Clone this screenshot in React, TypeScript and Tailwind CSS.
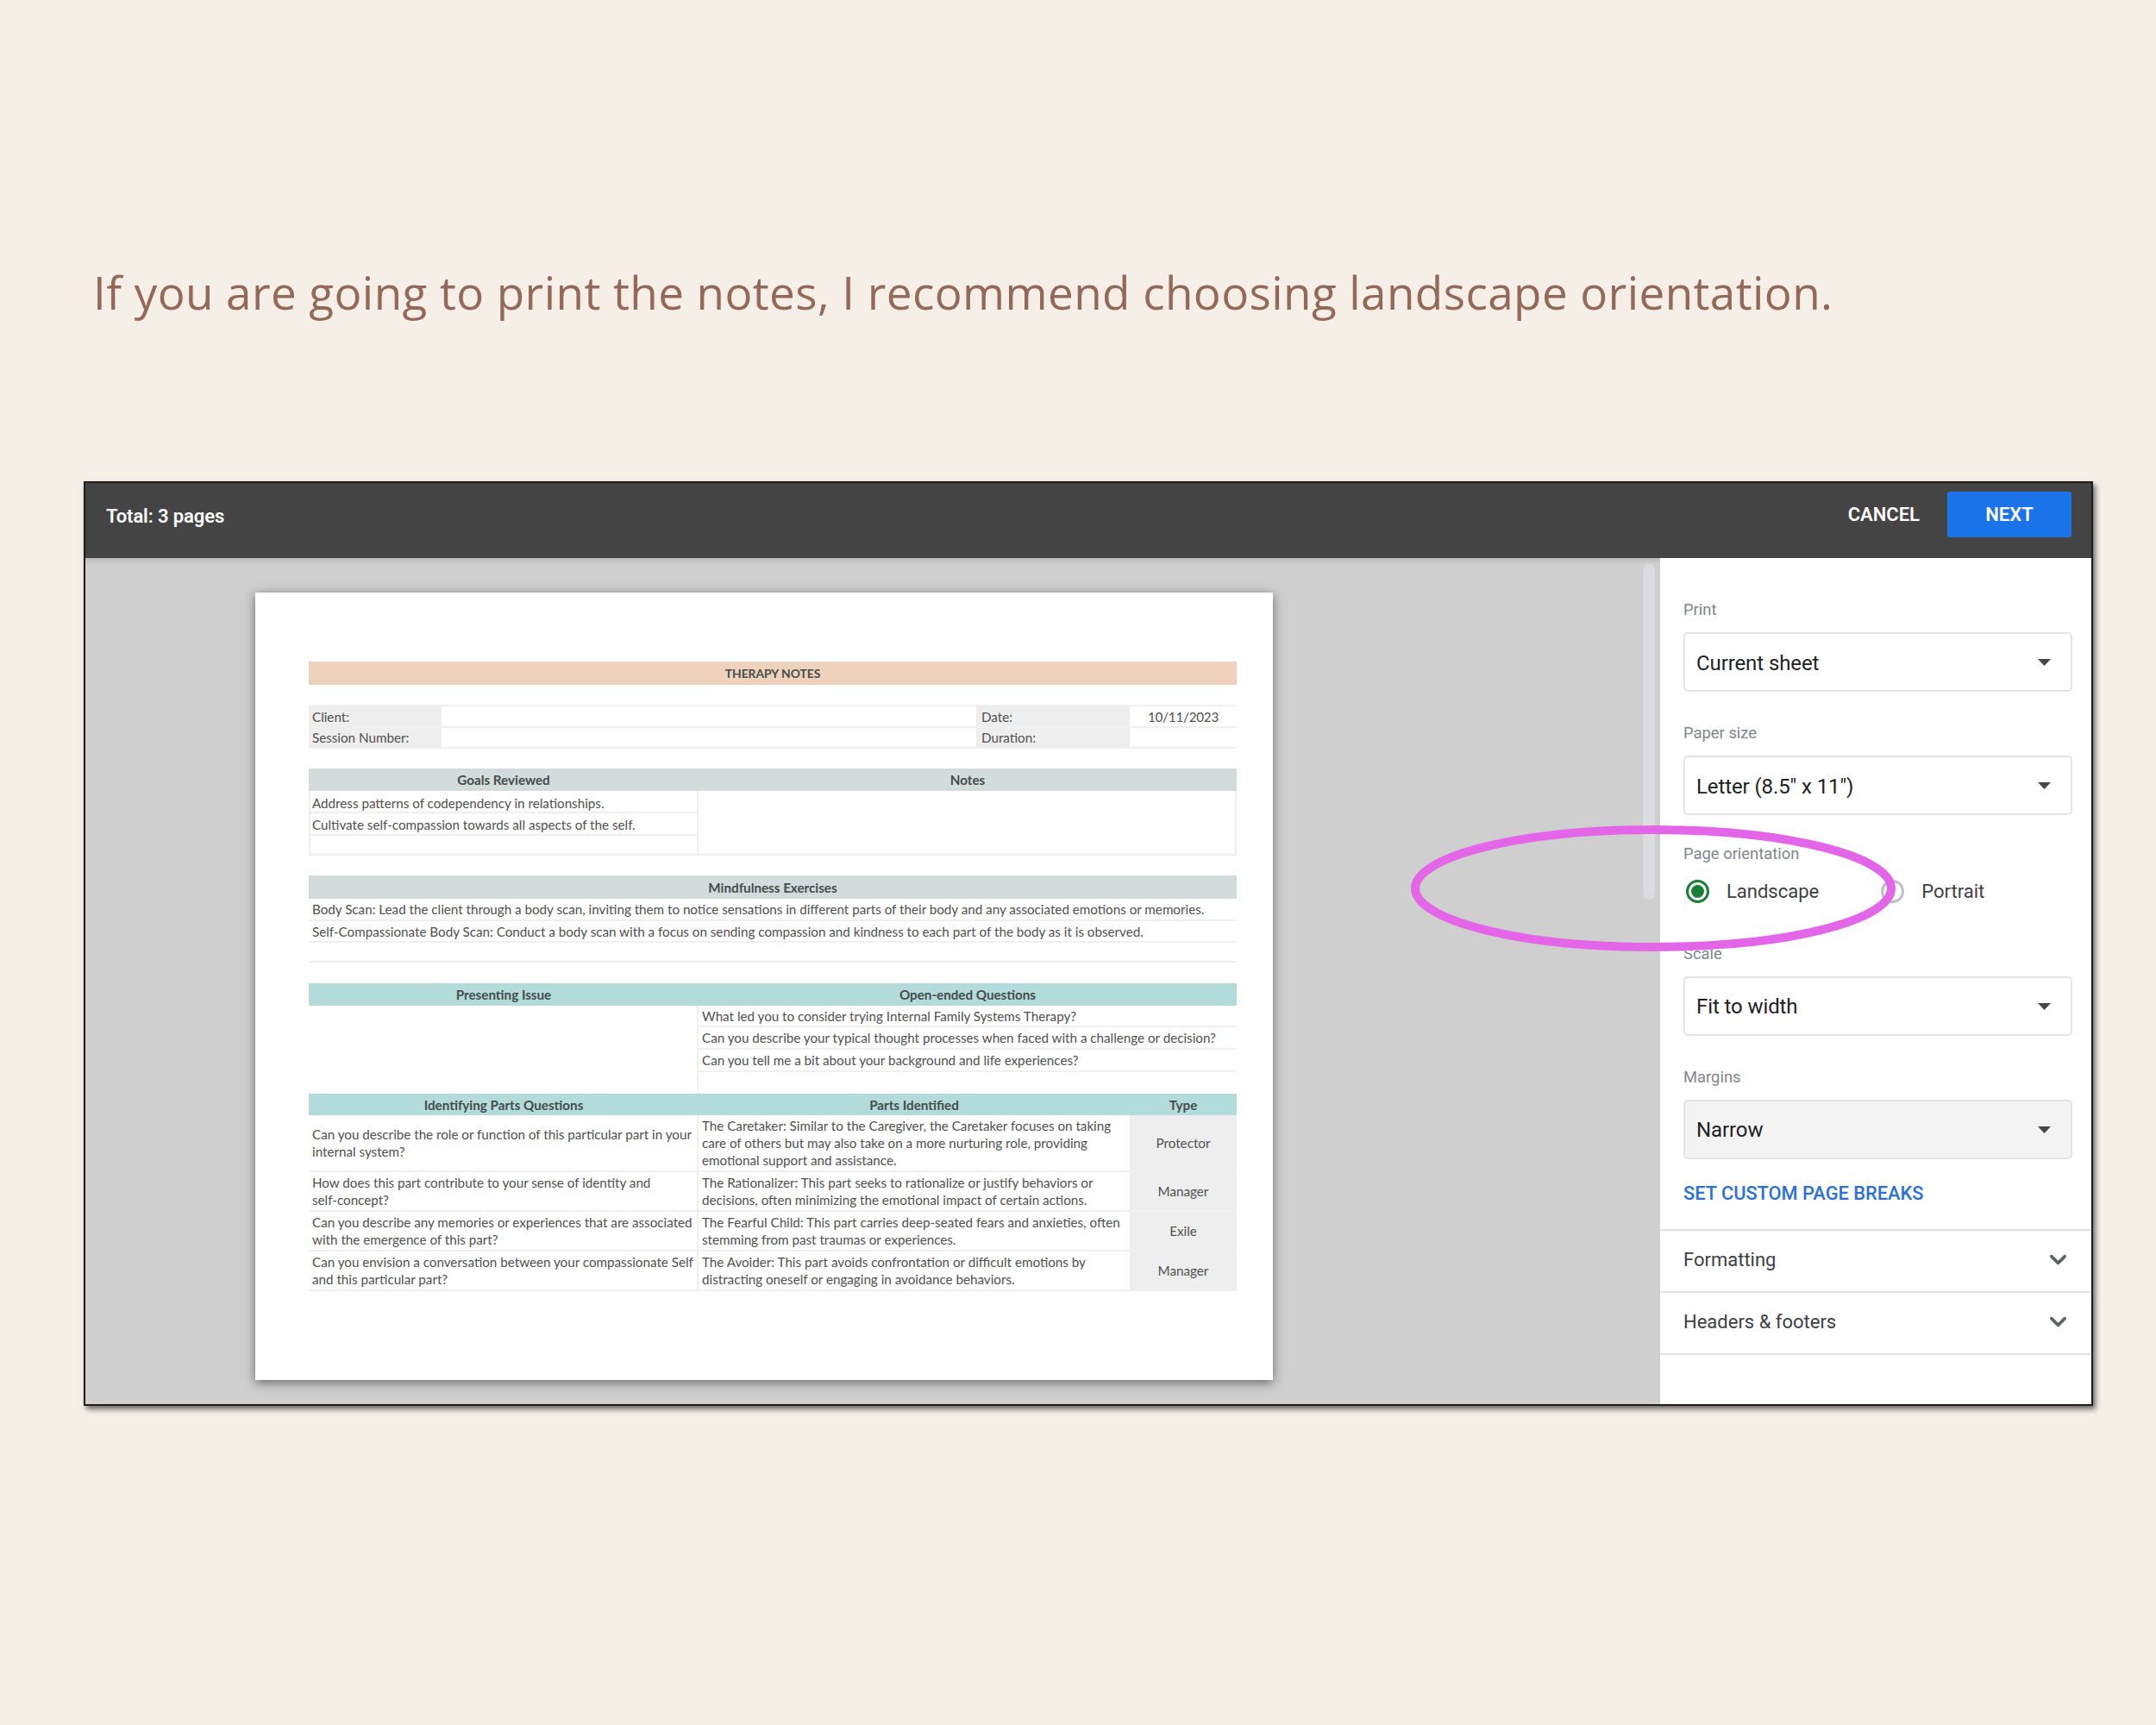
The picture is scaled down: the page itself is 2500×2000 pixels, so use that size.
import { ChevronDown } from 'lucide-react';

const sans = 'font-["Lato",sans-serif]';

function Caret() {
  return (
    <svg width="15" height="8" viewBox="0 0 15 8" className="shrink-0">
      <path d="M0 0h15L7.5 8z" fill="#444746" />
    </svg>
  );
}

function Field({ label, value, mt, muted, flush }: { label: string; value: string; mt: string; muted?: boolean; flush?: boolean }) {
  return (
    <div className={mt}>
      <div className="text-[18.4px] leading-[22px] text-[#80868b]">{label}</div>
      <div
        className={`mt-[15px] h-[69px] flex items-center justify-between pl-[13px] pr-[23px] border-2 border-[#e3e4e6] rounded-[5px] ${
          muted ? 'bg-[#f3f3f3]' : 'bg-white'
        }`}
      >
        <span className={`text-[24px] text-[#202124] tracking-[-0.1px] ${flush ? '' : 'pt-[2px]'}`}>{value}</span>
        <Caret />
      </div>
    </div>
  );
}

function Radio({ checked, label }: { checked?: boolean; label: string }) {
  return (
    <div className="flex items-center gap-[20px]">
      <div
        className={`w-[27px] h-[27px] rounded-full border-[3px] flex items-center justify-center ${
          checked ? 'border-[#188038]' : 'border-[#bdc1c6]'
        }`}
      >
        {checked && <div className="w-[15px] h-[15px] rounded-full bg-[#188038]" />}
      </div>
      <span className="text-[22px] text-[#3c4043]">{label}</span>
    </div>
  );
}

function Expander({ label }: { label: string }) {
  return (
    <div className="h-[72px] pb-[3px] border-t-2 border-[#e0e1e3] flex items-center justify-between pl-[27px] pr-[23px]">
      <span className="text-[22px] text-[#3c4043]">{label}</span>
      <ChevronDown className="w-[31px] h-[31px] text-[#5f6368]" strokeWidth={2.8} />
    </div>
  );
}

const Cell = ({ className = '', children }: { className?: string; children?: React.ReactNode }) => (
  <div className={`flex items-center px-[4px] border-b-2 border-[#f0f0f0] ${className}`}>{children}</div>
);

function Band({ color, children, className = '' }: { color: string; children: React.ReactNode; className?: string }) {
  return <div className={`flex font-bold text-[#454c4c] ${color} ${className}`}>{children}</div>;
}

const parts = [
  {
    h: 'h-[66px]',
    q: 'Can you describe the role or function of this particular part in your\ninternal system?',
    p: 'The Caretaker: Similar to the Caregiver, the Caretaker focuses on taking\ncare of others but may also take on a more nurturing role, providing\nemotional support and assistance.',
    t: 'Protector',
  },
  {
    h: 'h-[46px]',
    q: 'How does this part contribute to your sense of identity and\nself-concept?',
    p: 'The Rationalizer: This part seeks to rationalize or justify behaviors or\ndecisions, often minimizing the emotional impact of certain actions.',
    t: 'Manager',
  },
  {
    h: 'h-[46px]',
    q: 'Can you describe any memories or experiences that are associated\nwith the emergence of this part?',
    p: 'The Fearful Child: This part carries deep-seated fears and anxieties, often\nstemming from past traumas or experiences.',
    t: 'Exile',
  },
  {
    h: 'h-[46px]',
    q: 'Can you envision a conversation between your compassionate Self\nand this particular part?',
    p: 'The Avoider: This part avoids confrontation or difficult emotions by\ndistracting oneself or engaging in avoidance behaviors.',
    t: 'Manager',
  },
];

function Sheet() {
  return (
    <div className={`w-[1076px] ${sans} text-[15.2px] leading-[20px] text-[#505050] whitespace-pre`}>
      <Band color="bg-[#eed2bc]" className="h-[27px] items-center justify-center text-[13.8px]">
        THERAPY NOTES
      </Band>

      <div className="mt-[23px] grid grid-cols-[154px_620px_178px_124px] grid-rows-[25px_24px] border-t-2 border-[#f0f0f0]">
        <Cell className="bg-[#eeeeee]">Client:</Cell>
        <Cell />
        <Cell className="bg-[#eeeeee] pl-[6px]">Date:</Cell>
        <Cell className="justify-center tracking-[-0.2px]">10/11/2023</Cell>
        <Cell className="bg-[#eeeeee]">Session Number:</Cell>
        <Cell />
        <Cell className="bg-[#eeeeee] pl-[6px]">Duration:</Cell>
        <Cell />
      </div>

      <Band color="bg-[#d3dcdb]" className="mt-[23px] h-[26px] items-center">
        <div className="w-[452px] text-center">Goals Reviewed</div>
        <div className="flex-1 text-center">Notes</div>
      </Band>
      <div className="flex border-x-2 border-[#f0f0f0]">
        <div className="w-[450px] border-r-2 border-[#f0f0f0]">
          <Cell className="h-[26px] pl-[2px] pt-[3px]">Address patterns of codependency in relationships.</Cell>
          <Cell className="h-[26px] pl-[2px] pt-[1px]">Cultivate self-compassion towards all aspects of the self.</Cell>
          <Cell className="h-[23px]" />
        </div>
        <div className="flex-1 border-b-2 border-[#f0f0f0]" />
      </div>

      <Band color="bg-[#d3dcdb]" className="mt-[23px] h-[27px] items-center justify-center">
        Mindfulness Exercises
      </Band>
      <Cell className="h-[26px]">
        Body Scan: Lead the client through a body scan, inviting them to notice sensations in different parts of their body and any associated emotions or memories.
      </Cell>
      <Cell className="h-[25px]">
        Self-Compassionate Body Scan: Conduct a body scan with a focus on sending compassion and kindness to each part of the body as it is observed.
      </Cell>
      <Cell className="h-[23px]" />

      <Band color="bg-[#b2dbda]" className="mt-[24px] h-[26px] items-center">
        <div className="w-[452px] text-center">Presenting Issue</div>
        <div className="flex-1 text-center">Open-ended Questions</div>
      </Band>
      <div className="flex">
        <div className="w-[452px] border-r-2 border-[#f0f0f0]" />
        <div className="flex-1">
          <Cell className="h-[25px]">What led you to consider trying Internal Family Systems Therapy?</Cell>
          <Cell className="h-[26px]">Can you describe your typical thought processes when faced with a challenge or decision?</Cell>
          <Cell className="h-[26px]">Can you tell me a bit about your background and life experiences?</Cell>
          <div className="h-[22px]" />
        </div>
      </div>

      <Band color="bg-[#b2dbda]" className="mt-[3px] h-[25px] items-center">
        <div className="w-[452px] text-center">Identifying Parts Questions</div>
        <div className="w-[500px] text-center">Parts Identified</div>
        <div className="flex-1 text-center">Type</div>
      </Band>
      {parts.map((r) => (
        <div key={r.p} className={`flex ${r.h}`}>
          <Cell className="w-[452px] border-r-2">
            <span className="block">{r.q}</span>
          </Cell>
          <Cell className="w-[500px]">
            <span className="block">{r.p}</span>
          </Cell>
          <Cell className="flex-1 justify-center bg-[#eeeeee] border-[#e4e4e4]">{r.t}</Cell>
        </div>
      ))}
    </div>
  );
}

export default function App() {
  return (
    <div className="relative w-[2500px] h-[2000px] bg-[#f5efe8] font-['Roboto',sans-serif] pt-[303px]">
      <h1 className="ml-[108px] text-[53px] leading-[72px] tracking-[0.42px] whitespace-nowrap text-[#94695a] font-['Open_Sans',sans-serif]">
        If you are going to print the notes, I recommend choosing landscape orientation.
      </h1>

      <div className="relative ml-[97px] mt-[183px] w-[2330px] h-[1072px] border-2 border-[#1c1c1c] shadow-[3px_4px_6px_rgba(0,0,0,0.55)] flex flex-col bg-white">
        <div className="h-[87px] shrink-0 bg-[#444444] flex items-start justify-between pl-[24px] pr-[23px] pt-[10px]">
          <span className="mt-[16px] text-[22px] leading-[26px] font-semibold text-white tracking-[-0.1px]">Total: 3 pages</span>
          <div className="flex items-center gap-[32px]">
            <span className="text-[22px] font-semibold text-white">CANCEL</span>
            <button className="w-[144px] h-[53px] rounded-[3px] bg-[#1a73e8] text-[22px] font-semibold text-white">NEXT</button>
          </div>
        </div>

        <div className="flex-1 flex min-h-0">
          <div className="relative flex-1 bg-[#cfcfcf] shadow-[inset_0_8px_8px_-8px_rgba(0,0,0,0.2)]">
            <div className="absolute right-[6px] top-[7px] w-[14px] h-[389px] rounded-full bg-[#dadcdf]" />
            <div className="ml-[197px] mt-[40px] w-[1180px] h-[913px] bg-white shadow-[0_3px_12px_rgba(0,0,0,0.5)] pl-[62px] pt-[80px]">
              <Sheet />
            </div>
          </div>

          <div className="w-[500px] shrink-0 flex flex-col">
            <div className="pl-[27px] pr-[22px] pt-[49px] pb-[28px]">
              <Field label="Print" value="Current sheet" mt="" />
              <Field label="Paper size" value="Letter (8.5&quot; x 11&quot;)" mt="mt-[37px]" />
              <div className="mt-[34px]">
                <div className="text-[18.4px] leading-[22px] text-[#80868b]">Page orientation</div>
                <div className="mt-[16px] flex gap-[72px] pl-[3px]">
                  <Radio checked label="Landscape" />
                  <Radio label="Portrait" />
                </div>
              </div>
              <Field label="Scale" value="Fit to width" flush mt="mt-[45px]" />
              <Field label="Margins" value="Narrow" muted flush mt="mt-[37px]" />
              <div className="mt-[27px] text-[21.8px] leading-[26px] font-medium text-[#2a6fdb]">SET CUSTOM PAGE BREAKS</div>
            </div>
            <Expander label="Formatting" />
            <Expander label="Headers &amp; footers" />
            <div className="border-t-2 border-[#e0e1e3]" />
          </div>
        </div>

        <svg className="absolute left-[1536px] top-[396px]" width="564" height="148" viewBox="0 0 564 148" fill="none">
          <ellipse cx="282" cy="74" rx="276" ry="68" stroke="#e466e8" strokeWidth="10" />
        </svg>
      </div>
    </div>
  );
}
